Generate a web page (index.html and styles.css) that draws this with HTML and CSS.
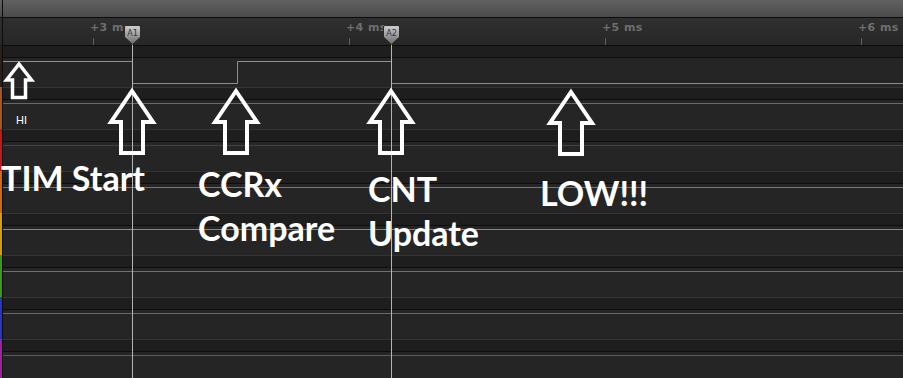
FILE: index.html
```html
<!DOCTYPE html>
<html>
<head>
<meta charset="utf-8">
<link rel="stylesheet" href="styles.css">
</head>
<body>
<div class="app">
  <div class="titlebar"></div>
  <div class="ruler">
    <div class="tick"><span class="tick-label">+3 ms</span><span class="tick-mark"></span></div>
    <div class="tick"><span class="tick-label">+4 ms</span><span class="tick-mark"></span></div>
    <div class="tick"><span class="tick-label">+5 ms</span><span class="tick-mark"></span></div>
    <div class="tick"><span class="tick-label">+6 ms</span><span class="tick-mark"></span></div>
  </div>
  <div class="channels">
    <div class="channel ch0"><div class="inner"><div class="head"></div><div class="sig"></div></div></div>
    <div class="channel ch1"><div class="inner"><div class="head"></div><div class="sig"><div class="trace"></div></div></div></div>
    <div class="channel ch2"><div class="inner"><div class="head"></div><div class="sig"><div class="trace"></div></div></div></div>
    <div class="channel ch3"><div class="inner"><div class="head"></div><div class="sig"><div class="trace"></div></div></div></div>
    <div class="channel ch4"><div class="inner"><div class="head"></div><div class="sig"><div class="trace"></div></div></div></div>
    <div class="channel ch5"><div class="inner"><div class="head"></div><div class="sig"><div class="trace"></div></div></div></div>
    <div class="channel ch6"><div class="inner"><div class="head"></div><div class="sig"><div class="trace"></div></div></div></div>
    <div class="channel ch7"><div class="inner"><div class="head"></div><div class="sig"><div class="trace"></div></div></div></div>
  </div>

  <svg class="overlay" width="903" height="378" viewBox="0 0 903 378">
    <defs>
      <linearGradient id="mk" x1="0" y1="0" x2="0" y2="1">
        <stop offset="0" stop-color="#cfcfcf"/>
        <stop offset="1" stop-color="#6a6a6a"/>
      </linearGradient>
    </defs>
    <path class="wave" d="M3 61.5 H132.5 V83.5 H237.5 V61.5 H391.5 V83.5 H903"/>
    <line class="cursor" x1="132.5" y1="44" x2="132.5" y2="378"/>
    <line class="cursor" x1="391.5" y1="44" x2="391.5" y2="378"/>
    <path class="marker" d="M124.5 27 Q124.5 25.5 126 25.5 H139 Q140.5 25.5 140.5 27 V37 L132.5 44.5 L124.5 37 Z"/>
    <text class="marker-text" x="132.5" y="36">A1</text>
    <path class="marker" d="M383.5 27 Q383.5 25.5 385 25.5 H398 Q399.5 25.5 399.5 27 V37 L391.5 44.5 L383.5 37 Z"/>
    <text class="marker-text" x="391.5" y="36">A2</text>

    <polygon class="arrow-sm" points="19,64 31.5,80 25.5,80 25.5,97.5 12.5,97.5 12.5,80 6.5,80"/>
    <polygon class="arrow" points="132,91 153,122 143,122 143,153 121,153 121,122 111,122"/>
    <polygon class="arrow" points="236,91 257,122 247,122 247,153 225,153 225,122 215,122"/>
    <polygon class="arrow" points="391,91 412,122 402,122 402,153 380,153 380,122 370,122"/>
    <polygon class="arrow" points="571,92 592,123 582,123 582,154 560,154 560,123 550,123"/>
  </svg>

  <div class="note hi">HI</div>
  <div class="note big n1">TIM Start</div>
  <div class="note big n2">CCRx<br>Compare</div>
  <div class="note big n3">CNT<br>Update</div>
  <div class="note big n4">LOW!!!</div>
</div>
</body>
</html>
```

FILE: styles.css
```css
html, body {
  margin: 0;
  padding: 0;
  background: #232323;
}

.app {
  position: relative;
  width: 903px;
  height: 378px;
  overflow: hidden;
  background: #232323;
  font-family: "Liberation Sans", Arial, sans-serif;
}

.titlebar {
  height: 17px;
  border-bottom: 1px solid #0e0e0e;
  background: linear-gradient(#626262, #4a4a4a);
  position: relative;
}

.titlebar::before,
.ruler::before {
  content: "";
  position: absolute;
  left: 2px;
  top: 0;
  bottom: 0;
  width: 1px;
  background: #0c0c0c;
}

.ruler {
  position: relative;
  height: 27px;
  background: linear-gradient(#2f2f2f, #272727);
  display: flex;
  padding-left: 90px;
  box-sizing: border-box;
}

.tick {
  width: 256px;
  flex: none;
  display: flex;
  flex-direction: column;
}

.tick-label {
  margin-top: 3px;
  font-family: "DejaVu Sans", sans-serif;
  font-weight: bold;
  font-size: 11px;
  line-height: 13px;
  letter-spacing: 0.4px;
  color: #6e6e6e;
}

.tick-mark {
  margin-top: auto;
  margin-left: 3px;
  width: 1px;
  height: 7px;
  background: #5e5e5e;
}

.channels {
  display: flex;
  flex-direction: column;
}

.channel {
  height: 42px;
  border-left: 2px solid var(--strip);
  box-sizing: border-box;
}

.inner {
  height: 100%;
  border-left: 1px solid #0c0c0c;
  border-top: 1px solid #343434;
  box-sizing: border-box;
  display: flex;
  flex-direction: column;
}

.ch0 .inner {
  border-top-color: #0c0c0c;
}

.head {
  height: 11px;
  background: #1e1e1e;
  border-bottom: 1px solid #0d0d0d;
}

.sig {
  flex: 1;
  background: #252525;
  padding-top: 3px;
  box-sizing: border-box;
}

.trace {
  height: 1px;
  background: var(--line);
}

.ch0 { --strip: #2a2018; }
.ch1 { --strip: #a8561a; --line: #a4581c; }
.ch2 { --strip: #c41818; --line: #9c1c2c; }
.ch3 { --strip: #d06a10; --line: #b06a18; }
.ch4 { --strip: #d4a200; --line: #b08a14; }
.ch5 { --strip: #3c9a1a; --line: #5a8c16; }
.ch6 { --strip: #2238c0; --line: #3a6cc8; }
.ch7 { --strip: #a020a0; --line: #7a38aa; }

.overlay {
  position: absolute;
  left: 0;
  top: 0;
  pointer-events: none;
}

.wave {
  fill: none;
  stroke: #8e8e8e;
  stroke-width: 1;
}

.cursor {
  stroke: #b4b4b4;
  stroke-width: 1;
}

.marker {
  fill: url(#mk);
  stroke: #2a2a2a;
  stroke-width: 1;
}

.marker-text {
  font-family: "DejaVu Sans", sans-serif;
  font-size: 8px;
  fill: #26335c;
  text-anchor: middle;
}

.arrow {
  fill: none;
  stroke: #ffffff;
  stroke-width: 4;
  stroke-linejoin: miter;
  stroke-miterlimit: 10;
}

.arrow-sm {
  fill: none;
  stroke: #ffffff;
  stroke-width: 3.5;
  stroke-linejoin: miter;
  stroke-miterlimit: 10;
}

.note {
  position: absolute;
  color: #ffffff;
  white-space: nowrap;
}

.hi {
  left: 16px;
  top: 114px;
  font-family: "Liberation Sans", Arial, sans-serif;
  font-size: 11px;
  line-height: 13px;
}

.big {
  font-family: Lato, "Open Sans", sans-serif;
  font-weight: 700;
  font-size: 34px;
  line-height: 44px;
}

.n1 { left: 1px; top: 156px; }
.n2 { left: 198px; top: 162px; }
.n3 { left: 368px; top: 167px; }
.n4 { left: 540px; top: 171px; }
```
